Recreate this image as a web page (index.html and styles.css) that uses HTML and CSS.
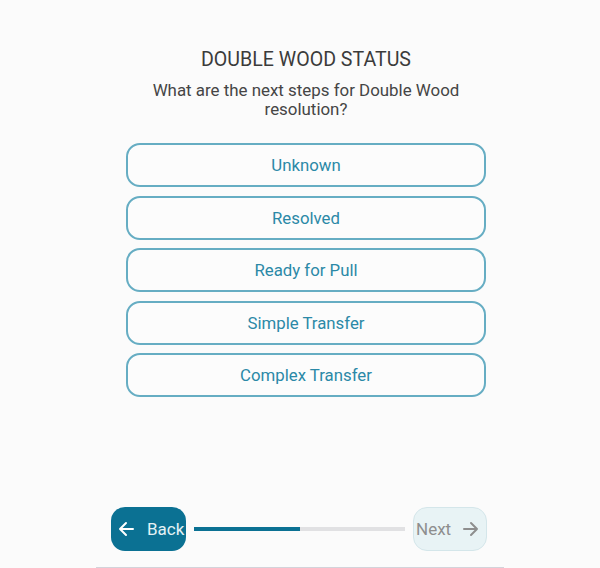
FILE: index.html
```html
<!DOCTYPE html>
<html lang="en">
<head>
<meta charset="utf-8">
<title>Double Wood Status</title>
<link rel="stylesheet" href="styles.css">
</head>
<body>
<div class="screen">
  <main class="content">
    <h1 class="title">DOUBLE WOOD STATUS</h1>
    <p class="question">What are the next steps for Double Wood resolution?</p>
    <div class="options">
      <button class="option">Unknown</button>
      <button class="option">Resolved</button>
      <button class="option">Ready for Pull</button>
      <button class="option">Simple Transfer</button>
      <button class="option">Complex Transfer</button>
    </div>
  </main>
  <footer class="footer">
    <button class="nav back">
      <svg class="arrow" width="16" height="16" viewBox="0 0 16 16"><path d="M15 8H2M8 2L2 8l6 6" fill="none" stroke="currentColor" stroke-width="2" stroke-linecap="round" stroke-linejoin="round"/></svg>
      <span>Back</span>
    </button>
    <div class="progress"><div class="progress-fill" style="width:50%"></div></div>
    <button class="nav next" disabled>
      <span>Next</span>
      <svg class="arrow" width="16" height="16" viewBox="0 0 16 16"><path d="M1 8h13M8 2l6 6-6 6" fill="none" stroke="currentColor" stroke-width="2" stroke-linecap="round" stroke-linejoin="round"/></svg>
    </button>
  </footer>
</div>
</body>
</html>
```

FILE: styles.css
```css
html, body {
  margin: 0;
  padding: 0;
  background: #fbfbfb;
}
body {
  font-family: Roboto, "Liberation Sans", sans-serif;
}
.screen {
  width: 408px;
  height: 567px;
  margin: 0 auto;
  border-bottom: 1px solid #d3d3da;
  display: flex;
  flex-direction: column;
}
.content {
  flex: 1;
  display: flex;
  flex-direction: column;
  align-items: center;
  padding-top: 48px;
  padding-left: 12px;
}
.title {
  margin: 0;
  font-size: 19.6px;
  font-weight: 400;
  line-height: 24px;
  color: #3b3b3b;
}
.question {
  margin: 9px 0 0;
  width: 340px;
  font-size: 16.9px;
  line-height: 19px;
  text-align: center;
  color: #454545;
}
.options {
  margin-top: 24px;
  display: flex;
  flex-direction: column;
  gap: 8.6px;
}
.option {
  width: 360px;
  height: 44px;
  border: 2px solid #66adc3;
  border-radius: 14px;
  background: #fcfcfc;
  color: #2b89a7;
  font-family: Roboto, "Liberation Sans", sans-serif;
  font-size: 16.8px;
  padding: 0;
}
.footer {
  display: flex;
  align-items: center;
  padding: 0 17px 16px 15px;
  gap: 8px;
}
.nav {
  height: 44px;
  border-radius: 14px;
  display: flex;
  align-items: center;
  font-family: Roboto, "Liberation Sans", sans-serif;
  font-size: 17px;
  padding: 0;
}
.back {
  width: 75px;
  background: #0b7193;
  border: none;
  color: #ffffff;
  padding-left: 7px;
  gap: 13px;
}
.back span { color: #e4f1f5; }
.next {
  width: 74px;
  background: #e8f3f5;
  border: 1px solid #d4e6ea;
  color: #8e8e8e;
  padding-left: 2px;
  gap: 12px;
}
.arrow { flex: none; }
.progress {
  flex: 1;
  height: 4px;
  background: #e1e1e3;
}
.progress-fill {
  height: 100%;
  background: #0b7193;
}
```
